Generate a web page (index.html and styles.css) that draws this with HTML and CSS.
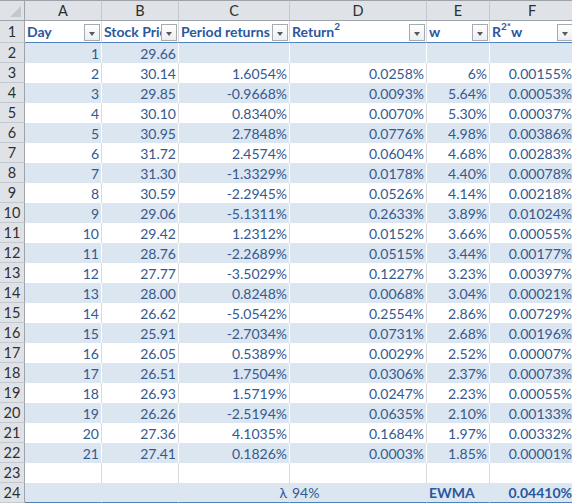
FILE: index.html
```html
<!DOCTYPE html>
<html>
<head>
<meta charset="utf-8">
<link rel="stylesheet" href="styles.css">
</head>
<body>
<div class="sheet">
<table class="grid">
<colgroup>
<col class="c-rh"><col class="c-a"><col class="c-b"><col class="c-c"><col class="c-d"><col class="c-e"><col class="c-f">
</colgroup>
<thead>
<tr class="colhdr">
<th class="corner"><span class="tri"></span></th><th>A</th><th>B</th><th>C</th><th>D</th><th>E</th><th>F</th>
</tr>
</thead>
<tbody>
<tr class="hdr">
<th class="rh">1</th>
<td><span class="lbl">Day</span><span class="flt"></span></td>
<td><span class="lbl">Stock Price</span><span class="flt"></span></td>
<td><span class="lbl">Period returns</span><span class="flt"></span></td>
<td><span class="lbl">Return<sup>2</sup></span><span class="flt"></span></td>
<td><span class="lbl">w</span><span class="flt"></span></td>
<td><span class="lbl">R<sup>2*</sup>w</span><span class="flt"></span></td>
</tr>
<tr class="band"><th class="rh">2</th><td class="n">1</td><td class="n">29.66</td><td class="n"></td><td class="n"></td><td class="n"></td><td class="n"></td></tr>
<tr><th class="rh">3</th><td class="n">2</td><td class="n">30.14</td><td class="n">1.6054%</td><td class="n">0.0258%</td><td class="n">6%</td><td class="n">0.00155%</td></tr>
<tr class="band"><th class="rh">4</th><td class="n">3</td><td class="n">29.85</td><td class="n">-0.9668%</td><td class="n">0.0093%</td><td class="n">5.64%</td><td class="n">0.00053%</td></tr>
<tr><th class="rh">5</th><td class="n">4</td><td class="n">30.10</td><td class="n">0.8340%</td><td class="n">0.0070%</td><td class="n">5.30%</td><td class="n">0.00037%</td></tr>
<tr class="band"><th class="rh">6</th><td class="n">5</td><td class="n">30.95</td><td class="n">2.7848%</td><td class="n">0.0776%</td><td class="n">4.98%</td><td class="n">0.00386%</td></tr>
<tr><th class="rh">7</th><td class="n">6</td><td class="n">31.72</td><td class="n">2.4574%</td><td class="n">0.0604%</td><td class="n">4.68%</td><td class="n">0.00283%</td></tr>
<tr class="band"><th class="rh">8</th><td class="n">7</td><td class="n">31.30</td><td class="n">-1.3329%</td><td class="n">0.0178%</td><td class="n">4.40%</td><td class="n">0.00078%</td></tr>
<tr><th class="rh">9</th><td class="n">8</td><td class="n">30.59</td><td class="n">-2.2945%</td><td class="n">0.0526%</td><td class="n">4.14%</td><td class="n">0.00218%</td></tr>
<tr class="band"><th class="rh">10</th><td class="n">9</td><td class="n">29.06</td><td class="n">-5.1311%</td><td class="n">0.2633%</td><td class="n">3.89%</td><td class="n">0.01024%</td></tr>
<tr><th class="rh">11</th><td class="n">10</td><td class="n">29.42</td><td class="n">1.2312%</td><td class="n">0.0152%</td><td class="n">3.66%</td><td class="n">0.00055%</td></tr>
<tr class="band"><th class="rh">12</th><td class="n">11</td><td class="n">28.76</td><td class="n">-2.2689%</td><td class="n">0.0515%</td><td class="n">3.44%</td><td class="n">0.00177%</td></tr>
<tr><th class="rh">13</th><td class="n">12</td><td class="n">27.77</td><td class="n">-3.5029%</td><td class="n">0.1227%</td><td class="n">3.23%</td><td class="n">0.00397%</td></tr>
<tr class="band"><th class="rh">14</th><td class="n">13</td><td class="n">28.00</td><td class="n">0.8248%</td><td class="n">0.0068%</td><td class="n">3.04%</td><td class="n">0.00021%</td></tr>
<tr><th class="rh">15</th><td class="n">14</td><td class="n">26.62</td><td class="n">-5.0542%</td><td class="n">0.2554%</td><td class="n">2.86%</td><td class="n">0.00729%</td></tr>
<tr class="band"><th class="rh">16</th><td class="n">15</td><td class="n">25.91</td><td class="n">-2.7034%</td><td class="n">0.0731%</td><td class="n">2.68%</td><td class="n">0.00196%</td></tr>
<tr><th class="rh">17</th><td class="n">16</td><td class="n">26.05</td><td class="n">0.5389%</td><td class="n">0.0029%</td><td class="n">2.52%</td><td class="n">0.00007%</td></tr>
<tr class="band"><th class="rh">18</th><td class="n">17</td><td class="n">26.51</td><td class="n">1.7504%</td><td class="n">0.0306%</td><td class="n">2.37%</td><td class="n">0.00073%</td></tr>
<tr><th class="rh">19</th><td class="n">18</td><td class="n">26.93</td><td class="n">1.5719%</td><td class="n">0.0247%</td><td class="n">2.23%</td><td class="n">0.00055%</td></tr>
<tr class="band"><th class="rh">20</th><td class="n">19</td><td class="n">26.26</td><td class="n">-2.5194%</td><td class="n">0.0635%</td><td class="n">2.10%</td><td class="n">0.00133%</td></tr>
<tr><th class="rh">21</th><td class="n">20</td><td class="n">27.36</td><td class="n">4.1035%</td><td class="n">0.1684%</td><td class="n">1.97%</td><td class="n">0.00332%</td></tr>
<tr class="band"><th class="rh">22</th><td class="n">21</td><td class="n">27.41</td><td class="n">0.1826%</td><td class="n">0.0003%</td><td class="n">1.85%</td><td class="n">0.00001%</td></tr>
<tr><th class="rh">23</th><td></td><td></td><td></td><td></td><td></td><td></td></tr>
<tr class="band total"><th class="rh">24</th><td></td><td></td><td class="n">λ</td><td class="t">94%</td><td class="t b">EWMA</td><td class="n b">0.04410%</td></tr>
</tbody>
</table>
</div>
</body>
</html>
```

FILE: styles.css
```css
html, body {
  margin: 0;
  padding: 0;
  background: #ffffff;
}
.sheet {
  width: 572px;
  height: 504px;
  overflow: hidden;
}
.grid {
  border-collapse: separate;
  border-spacing: 0;
  table-layout: fixed;
  width: 575px;
  font-family: Lato, "Liberation Sans", sans-serif;
  font-size: 14px;
  color: #34598f;
}
.c-rh { width: 25px; }
.c-a { width: 77px; }
.c-b { width: 77px; }
.c-c { width: 111px; }
.c-d { width: 137px; }
.c-e { width: 63px; }
.c-f { width: 85px; }

th, td {
  box-sizing: border-box;
  padding: 0 2px;
  white-space: nowrap;
  overflow: hidden;
}
.colhdr th {
  height: 21px;
  background: #dfe3e8;
  border-top: 1px solid #9ea3a9;
  border-bottom: 1px solid #9ea3a9;
  border-right: 1px solid #c4c9cf;
  color: #2f2f2f;
  font-weight: normal;
  font-size: 14.5px;
  text-align: center;
  line-height: 19px;
  padding: 0;
}
.colhdr th.corner {
  position: relative;
  border-right: 1px solid #9ea3a9;
}
.tri {
  position: absolute;
  right: 3px;
  bottom: 3px;
  width: 0;
  height: 0;
  border-left: 11px solid transparent;
  border-bottom: 11px solid #c3c8ce;
}
.rh {
  background: #dfe3e8;
  color: #2f2f2f;
  font-weight: normal;
  font-size: 14.5px;
  text-align: center;
  border-right: 1px solid #9ea3a9;
  border-bottom: 1px solid #c4c9cf;
  height: 20px;
  line-height: 19px;
  padding: 0;
}
td {
  height: 20px;
  line-height: 19px;
  border-right: 1px solid #d9dcdf;
  vertical-align: bottom;
}
.band td {
  background: #dce6f1;
  border-right-color: #ffffff;
}
.hdr td {
  position: relative;
  height: 22px;
  border-bottom: 1px solid #4f81bd;
  font-weight: bold;
  color: #2b579e;
  padding-bottom: 1px;
}
.hdr .rh {
  height: 22px;
  border-bottom: 1px solid #c4c9cf;
}
sup {
  font-size: 10px;
  line-height: 0;
  vertical-align: 7px;
}
.flt {
  position: absolute;
  right: 1px;
  top: 3px;
  width: 16px;
  height: 17px;
  box-sizing: border-box;
  border: 1px solid #a6abb1;
  background: linear-gradient(#ffffff, #eceef1);
}
.flt::after {
  content: "";
  position: absolute;
  left: 4px;
  top: 7px;
  border-left: 3.5px solid transparent;
  border-right: 3.5px solid transparent;
  border-top: 4px solid #555a60;
}
.n {
  text-align: right;
}
.t {
  text-align: left;
}
.b {
  font-weight: bold;
  color: #2b579e;
}
.total td {
  border-right-color: #dce6f1;
  border-bottom: 1px solid #4f81bd;
}
.total .rh {
  border-bottom: 1px solid #c4c9cf;
}
```
